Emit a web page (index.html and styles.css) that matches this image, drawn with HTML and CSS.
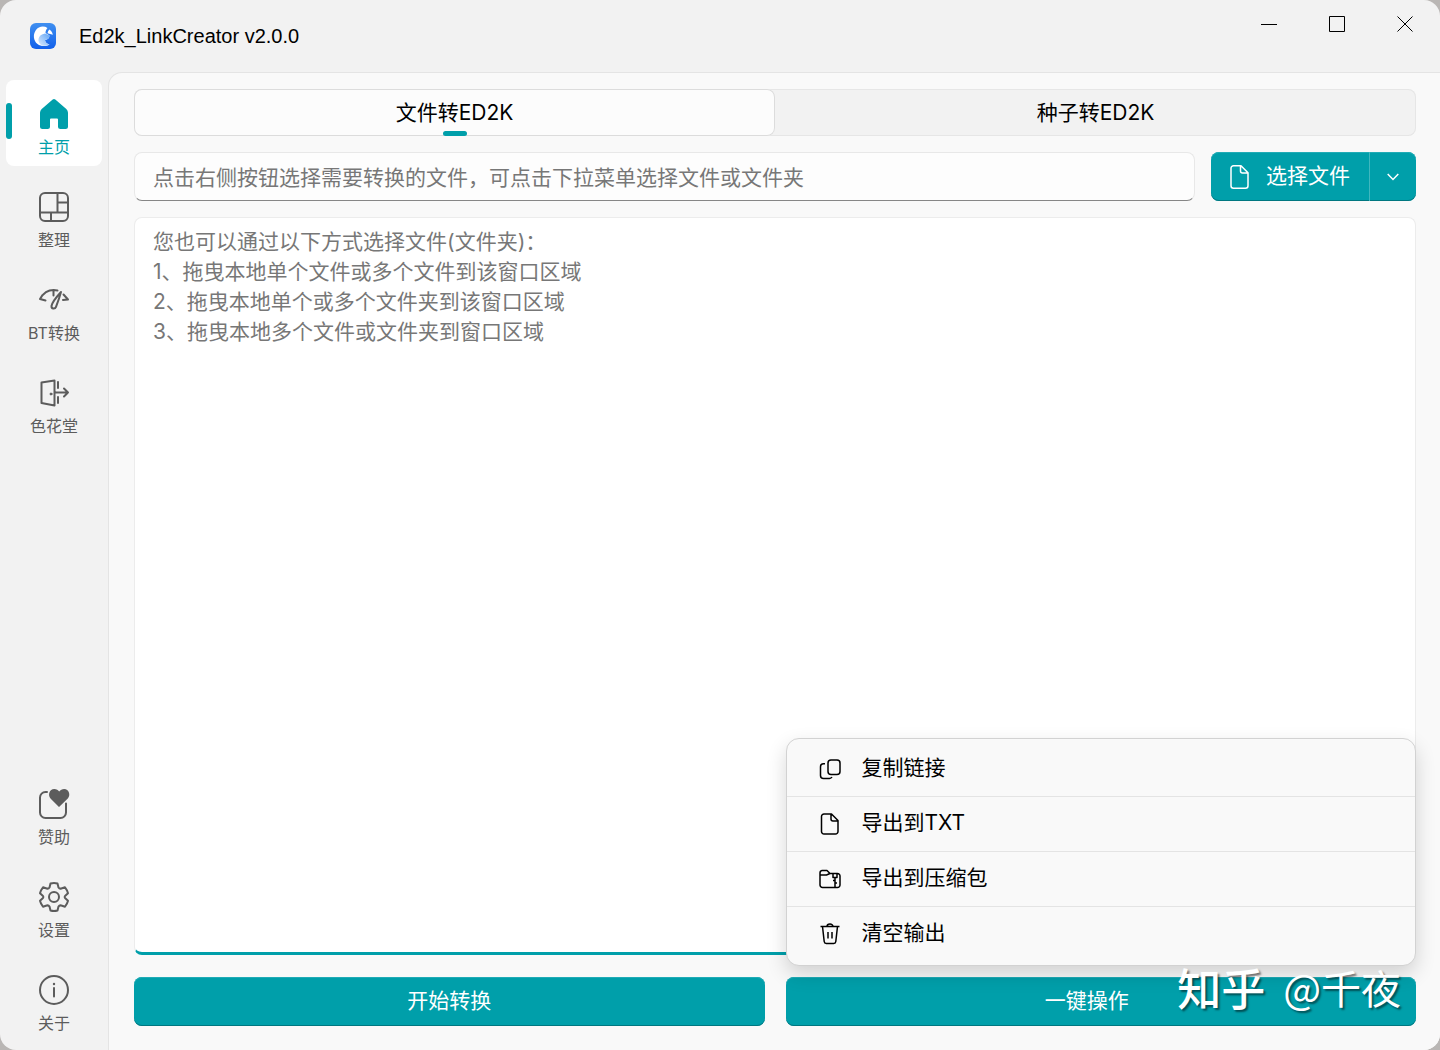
FILE: index.html
```html
<!DOCTYPE html>
<html lang="zh-CN">
<head>
<meta charset="utf-8">
<meta name="viewport" content="width=device-width, initial-scale=1">
<title>Ed2k_LinkCreator v2.0.0</title>
<link rel="stylesheet" href="styles.css">
</head>
<body>
<div class="window">
  <header class="titlebar">
    <svg class="logo" viewBox="0 0 26 26" aria-hidden="true">
      <defs>
        <linearGradient id="logo-bg" x1="0" y1="0" x2="0" y2="1"><stop offset="0" stop-color="#3f8ff0"/><stop offset="1" stop-color="#1260ea"/></linearGradient>
        <linearGradient id="logo-wing" x1="1" y1="0" x2="0" y2="1"><stop offset="0" stop-color="#5fa4f5"/><stop offset="1" stop-color="#dcebfe"/></linearGradient>
      </defs>
      <rect width="26" height="26" rx="6" fill="url(#logo-bg)"/>
      <path d="M17.500 5C13.500 2.500 8.500 3.500 5.800 7.200 2.800 11.500 3.300 17.500 7.500 21c3.500 2.600 8.500 2.600 12 .5-3-1-4.300-2.500-4.500-4.500 2.500-.3 4.500-1.800 4.500-4.500l-4-2.500c0-2 .8-3.800 2-5z" fill="#fff"/>
      <path d="M15 10.500c-3.500.5-6 2.500-6.500 5.500-.4 2.500.8 4.700 3 6.500 2.800.7 5.500.3 8-1-3-1-4.300-2.500-4.500-4.500 2.500-.3 4.500-1.800 4.500-4.500z" fill="url(#logo-wing)"/>
      <path d="M19.300 6.500c2 1.200 3.200 3 3.500 5.300l-5.300-1.600c.2-1.500.8-2.700 1.800-3.700z" fill="#fff"/>
    </svg>
    <h1 class="title">Ed2k_LinkCreator v2.0.0</h1>
    <div class="controls">
      <button class="control" type="button" aria-label="最小化"><svg viewBox="0 0 16 16"><path d="M0 8.500h16"/></svg></button>
      <button class="control" type="button" aria-label="最大化"><svg viewBox="0 0 16 16"><path d="M.5.5h15v15H.5z"/></svg></button>
      <button class="control" type="button" aria-label="关闭"><svg viewBox="0 0 16 16"><path d="M.5.5l15 15M15.500.5l-15 15"/></svg></button>
    </div>
  </header>

  <nav class="sidebar">
    <a class="nav-item active" href="#home">
      <svg class="nav-icon" viewBox="0 0 30 30"><path fill="currentColor" stroke="none" d="M13.700.5a2 2 0 0 1 2.600 0l11 9.500a5 5 0 0 1 1.700 3.700V27.500a2.500 2.500 0 0 1-2.500 2.500H21.500a2.500 2.500 0 0 1-2.500-2.500V20.500a1 1 0 0 0-1-1h-6a1 1 0 0 0-1 1v7A2.500 2.500 0 0 1 8.500 30H3.500A2.500 2.500 0 0 1 1 27.500V13.700a5 5 0 0 1 1.700-3.700z"/></svg>
      <span>主页</span>
    </a>
    <a class="nav-item" href="#organize">
      <svg class="nav-icon" viewBox="0 0 30 30"><rect x="1" y="1" width="28" height="28" rx="5"/><path d="M18.500 1v19.500M18.500 10.500H29M1 20.500h28M12 20.500V29"/></svg>
      <span>整理</span>
    </a>
    <a class="nav-item" href="#bt">
      <svg class="nav-icon" viewBox="0 0 30 30"><path d="M6.500 15.500 1 14C5 7 11 4 18.500 5.500M1 14l2.500-4M14.500 5v5.500M22 7C17 12.500 13 17.500 12.500 21c-.2 3 3.500 3.500 4.500.8C18.500 18 20.500 12.500 22 7zM24.500 9.500l4.500 5-5 .5"/></svg>
      <span>BT转换</span>
    </a>
    <a class="nav-item" href="#sehuatang">
      <svg class="nav-icon" viewBox="0 0 30 30"><path d="M15.500 2.500 2.500 4.500v20.500l13 2.500zM19 4v6M19 19v6M16.500 14.500h12.500M25 10.500l4 4-4 4"/><circle cx="12" cy="16" r="1" fill="currentColor" stroke-width="1"/></svg>
      <span>色花堂</span>
    </a>
    <a class="nav-item push" href="#sponsor">
      <svg class="nav-icon" viewBox="0 0 30 30"><path d="M8 3H6.500A5.500 5.500 0 0 0 1 8.500v15A5.500 5.500 0 0 0 6.500 29h15a5.500 5.500 0 0 0 5.500-5.500V14.500"/><path fill="currentColor" stroke="none" d="M20 18 11.500 9.500C8.500 6 10.500 0 15.200 0 17.700 0 19 1.200 20.200 2.600 21.500 1.200 23 0 25.200 0c4.600 0 6.800 6 3.600 9.500z"/></svg>
      <span>赞助</span>
    </a>
    <a class="nav-item" href="#settings">
      <svg class="nav-icon" viewBox="0 0 30 30"><path d="M11.500 1.500Q15 .5 18.500 1.500L19.500 5.500Q20.500 7 22.300 6.500L26 5.300Q28.200 8 29 11.300L26 14Q25.200 15 26 16L29 18.700Q28.200 22 26 24.700L22.300 23.500Q20.500 23 19.500 24.500L18.500 28.500Q15 29.500 11.500 28.500L10.500 24.500Q9.500 23 7.700 23.500L4 24.700Q1.800 22 1 18.700L4 16Q4.800 15 4 14L1 11.300Q1.800 8 4 5.300L7.700 6.500Q9.500 7 10.500 5.500z"/><circle cx="15" cy="15" r="5"/></svg>
      <span>设置</span>
    </a>
    <a class="nav-item" href="#about">
      <svg class="nav-icon" viewBox="0 0 30 30"><circle cx="15" cy="15" r="14"/><path d="M15 13v8.500"/><circle cx="15" cy="9" r="1.200" fill="currentColor" stroke="none"/></svg>
      <span>关于</span>
    </a>
  </nav>

  <main class="content">
    <div class="tabs" role="tablist">
      <button class="tab selected" type="button" role="tab" aria-selected="true">文件转ED2K</button>
      <button class="tab" type="button" role="tab" aria-selected="false">种子转ED2K</button>
    </div>
    <div class="picker">
      <input class="path" type="text" aria-label="文件路径" placeholder="点击右侧按钮选择需要转换的文件，可点击下拉菜单选择文件或文件夹">
      <div class="split">
        <button class="choose" type="button">
          <svg class="file-icon" viewBox="0 0 24 24"><path d="M5.500.700h7.500L20 7.700v13a2.500 2.500 0 0 1-2.500 2.500h-12A2.500 2.500 0 0 1 3 20.700V3.200A2.500 2.500 0 0 1 5.500.7zM12.500.7V6A2 2 0 0 0 14.500 8H20"/></svg>
          <span class="label">选择文件</span>
        </button>
        <button class="drop" type="button" aria-label="更多选择方式"><svg viewBox="0 0 12 8"><path d="m.7 1 5.300 5.500L11.300 1"/></svg></button>
      </div>
    </div>
    <textarea class="output" aria-label="输出" placeholder="您也可以通过以下方式选择文件(文件夹)：&#10;1、拖曳本地单个文件或多个文件到该窗口区域&#10;2、拖曳本地单个或多个文件夹到该窗口区域&#10;3、拖曳本地多个文件或文件夹到窗口区域"></textarea>
    <div class="actions">
      <button class="primary" type="button">开始转换</button>
      <div class="menu-anchor">
        <button class="primary with-menu" type="button" aria-haspopup="menu" aria-expanded="true">一键操作</button>
        <div class="menu" role="menu">
          <button class="menu-item" type="button" role="menuitem">
            <svg viewBox="0 0 22 22"><rect x="9" y="2" width="12" height="14.500" rx="3"/><path d="M6 5.700H4.500a3 3 0 0 0-3 3V17.500a3 3 0 0 0 3 3h6a3 3 0 0 0 2.500-1.500"/></svg><span class="label">复制链接</span></button>
          <button class="menu-item" type="button" role="menuitem">
            <svg viewBox="0 0 22 22"><path d="M5 1h7.500L19 7.500v11a2.500 2.500 0 0 1-2.500 2.500H5A2.500 2.500 0 0 1 2.500 18.500v-15A2.500 2.500 0 0 1 5 1zM12 1v5a2 2 0 0 0 2 2h5"/></svg><span class="label">导出到TXT</span></button>
          <button class="menu-item" type="button" role="menuitem">
            <svg viewBox="0 0 22 22"><path d="M3 2.500h5l3 3h7.500A2.500 2.500 0 0 1 21 8v9a2.500 2.500 0 0 1-2.500 2.500h-15A2.500 2.500 0 0 1 1 17V5a2.500 2.500 0 0 1 2-2.500zM1 7h6.500l3.500-1.500M14 5.500v4h2M18 5.500v4h-2v3M14 12.500h2v2.500M18 15h-2v4.500"/></svg><span class="label">导出到压缩包</span></button>
          <button class="menu-item" type="button" role="menuitem">
            <svg viewBox="0 0 22 22"><path d="M1.500 3.500h19M8 3.500a3 2.500 0 0 1 6 0M3.500 3.500l1.700 15A2.200 2.200 0 0 0 7.300 20.500h7.400a2.200 2.200 0 0 0 2.100-2L18.500 3.500M9 9v6.500M13 9v6.500"/></svg><span class="label">清空输出</span></button>
        </div>
      </div>
    </div>
  </main>
  <div class="watermark"><strong>知乎</strong><span>@千夜</span></div>
</div>
</body>
</html>
```
FILE: styles.css
```css
* { box-sizing: border-box; }

body {
  margin: 0;
  background: #b9b6b4;
  color: #000;
  font-family: Inter, "Noto Sans CJK SC", sans-serif;
  font-size: 21px;
}

button, input, textarea { font: inherit; color: inherit; margin: 0; }
button { border: 0; background: none; padding: 0; }
svg { fill: none; stroke: currentColor; flex: none; overflow: visible; }
.label { padding-bottom: 2px; line-height: 30px; }

.window {
  position: relative;
  display: grid;
  grid-template: 72px 1fr / 108px 1fr;
  min-height: 100vh;
  background: #f2f2f2;
  border-radius: 16px;
  overflow: hidden;
}

.titlebar {
  grid-column: 1 / -1;
  display: flex;
  align-items: center;
  padding-left: 30px;
}
.logo { width: 26px; height: 26px; stroke: none; }
.title {
  margin: 0 0 0 23px;
  font-family: "Liberation Sans", sans-serif;
  font-size: 20px;
  font-weight: 400;
  line-height: 24px;
}
.controls { display: flex; align-self: flex-start; margin-left: auto; padding-right: 1px; }
.control { display: grid; place-items: center; width: 68px; height: 48px; }
.control svg { width: 16px; height: 16px; }

.sidebar {
  display: flex;
  flex-direction: column;
  gap: 7px;
  padding: 8px 6px;
}
.nav-item {
  position: relative;
  display: flex;
  flex-direction: column;
  align-items: center;
  gap: 6px;
  height: 86px;
  padding-top: 19px;
  border-radius: 8px;
  color: #5c5c5c;
  font-size: 16px;
  line-height: 24px;
  text-decoration: none;
}
.nav-icon { width: 30px; height: 30px; stroke-width: 2; stroke-linejoin: round; stroke-linecap: round; }
.push { margin-top: auto; }
.active { background: #fff; color: #009faa; }
.active::before {
  content: "";
  position: absolute;
  left: 0;
  top: 23px;
  width: 6px;
  height: 36px;
  border-radius: 3px;
  background: #009faa;
}

.content {
  display: flex;
  flex-direction: column;
  gap: 16px;
  min-width: 0;
  padding: 16px 24px 24px 25px;
  border: 1px solid #e4e4e4;
  border-width: 1px 0 0 1px;
  border-top-left-radius: 14px;
  background: #f9f9f9;
}

.tabs {
  display: flex;
  height: 47px;
  border-radius: 8px;
  background: #f2f2f2;
  box-shadow: inset 0 0 0 1px #e6e6e6;
}
.tab { position: relative; flex: 1; padding-bottom: 4px; border-radius: 8px; }
.selected { background: #fcfcfc; box-shadow: inset 0 0 0 1px #dcdcdc; }
.selected::after {
  content: "";
  position: absolute;
  left: calc(50% - 12px);
  bottom: 0;
  width: 24px;
  height: 5px;
  border-radius: 3px;
  background: #009faa;
}

.picker { display: flex; gap: 16px; height: 49px; }
.path {
  flex: 1;
  min-width: 0;
  padding: 1px 18px 0;
  border: 1px solid #e8e8e8;
  border-bottom-color: #868686;
  border-radius: 8px;
  background: #fdfdfd;
}
.path::placeholder, .output::placeholder { color: #777; opacity: 1; }
.split {
  display: flex;
  border-radius: 8px;
  background: #009faa;
  box-shadow: inset 0 -1px #007780, inset 0 1px #20acb6;
  color: #fff;
}
.choose { display: flex; align-items: center; gap: 14px; width: 158px; padding-left: 17px; }
.file-icon { width: 24px; height: 24px; stroke-width: 1.5; stroke-linejoin: round; }
.drop { display: grid; place-items: center; width: 47px; border-left: 1px solid #40b7bf; }
.drop svg { width: 12px; height: 8px; stroke-width: 1.5; }

.output {
  flex: 1;
  width: 100%;
  padding: 9px 18px;
  border: 1px solid #ececec;
  border-bottom: 3px solid #009faa;
  border-radius: 8px;
  background: #fff;
  line-height: 30px;
  resize: none;
}

.actions { display: grid; grid-template-columns: 1fr 1fr; gap: 21px; margin-top: 6px; }
.primary {
  width: 100%;
  height: 49px;
  padding-bottom: 5px;
  border-radius: 8px;
  background: #009faa;
  box-shadow: inset 0 -1px #007780, inset 0 1px #20acb6;
  color: #fff;
}
.with-menu { padding-right: 28px; }
.menu-anchor { position: relative; }
.menu {
  position: absolute;
  left: 0;
  right: 0;
  bottom: calc(100% + 11px);
  padding: 3px 0 4px;
  border: 1px solid #d2d2d2;
  border-radius: 13px;
  background: #f9f9f9;
  box-shadow: 0 8px 20px rgba(0, 0, 0, 0.16);
}
.menu-item {
  display: flex;
  align-items: center;
  gap: 21px;
  width: 100%;
  height: 54px;
  padding-left: 32px;
}
.menu-item + .menu-item { height: 55px; border-top: 1px solid #e4e4e4; }
.menu-item svg { width: 22px; height: 22px; stroke-width: 1.5; stroke-linejoin: round; }

.watermark {
  position: absolute;
  right: 39px;
  bottom: 33px;
  display: flex;
  gap: 18px;
  color: #fff;
  font-family: "Noto Sans CJK SC", sans-serif;
  font-size: 40px;
  line-height: 60px;
  text-shadow: 2px 2px 2px rgba(0, 0, 0, 0.5);
  pointer-events: none;
}
.watermark strong { font-size: 44px; font-weight: 500; }
```
